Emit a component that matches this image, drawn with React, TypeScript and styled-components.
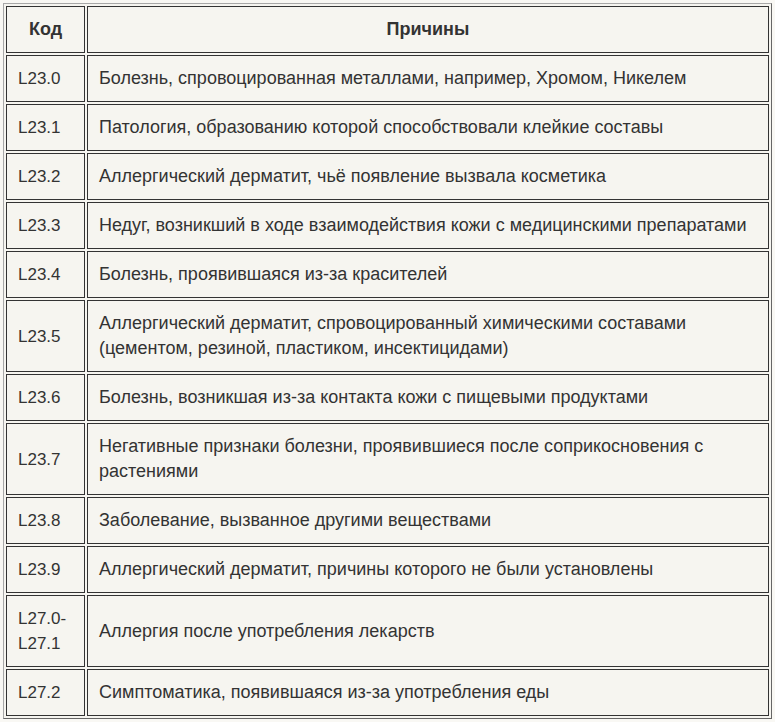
import React from 'react';
import styled, { createGlobalStyle } from 'styled-components';

const Global = createGlobalStyle`
  html, body {
    margin: 0;
    padding: 0;
    background: #f9f8f4;
  }
  body {
    font-family: "Liberation Sans", Arial, sans-serif;
    color: #333;
  }
`;

const Page = styled.div`
  padding: 3px 0 0 3px;
`;

const Table = styled.table`
  width: 769px;
  border-collapse: separate;
  border-spacing: 2px;
  border-top: 1px solid #a8a8a8;
  border-left: 1px solid #a8a8a8;
  border-right: 1px solid #666;
  border-bottom: 1px solid #666;
  background: #f6f5f0;
  font-size: 18px;
  line-height: 25px;
`;

const Th = styled.th<{ $code?: boolean }>`
  border: 1px solid #333;
  padding: 10px 11px;
  font-weight: bold;
  font-size: 18px;
  text-align: center;
  vertical-align: middle;
  width: ${p => (p.$code ? '55px' : 'auto')};
`;

const Td = styled.td<{ $code?: boolean }>`
  border: 1px solid #333;
  padding: 10px 11px;
  text-align: left;
  vertical-align: middle;
  width: ${p => (p.$code ? '55px' : 'auto')};
  font-size: ${p => (p.$code ? '17px' : '18px')};
`;

const rows: [string, string][] = [
  ['L23.0', 'Болезнь, спровоцированная металлами, например, Хромом, Никелем'],
  ['L23.1', 'Патология, образованию которой способствовали клейкие составы'],
  ['L23.2', 'Аллергический дерматит, чьё появление вызвала косметика'],
  ['L23.3', 'Недуг, возникший в ходе взаимодействия кожи с медицинскими препаратами'],
  ['L23.4', 'Болезнь, проявившаяся из-за красителей'],
  ['L23.5', 'Аллергический дерматит, спровоцированный химическими составами (цементом, резиной, пластиком, инсектицидами)'],
  ['L23.6', 'Болезнь, возникшая из-за контакта кожи с пищевыми продуктами'],
  ['L23.7', 'Негативные признаки болезни, проявившиеся после соприкосновения с растениями'],
  ['L23.8', 'Заболевание, вызванное другими веществами'],
  ['L23.9', 'Аллергический дерматит, причины которого не были установлены'],
  ['L27.0-L27.1', 'Аллергия после употребления лекарств'],
  ['L27.2', 'Симптоматика, появившаяся из-за употребления еды'],
];

export default function App() {
  return (
    <>
      <Global />
      <Page>
        <Table>
          <thead>
            <tr>
              <Th $code>Код</Th>
              <Th>Причины</Th>
            </tr>
          </thead>
          <tbody>
            {rows.map(([code, reason]) => (
              <tr key={code}>
                <Td $code>
                  {code.includes('-') ? (
                    <>
                      {code.split('-')[0]}-<br />
                      {code.split('-')[1]}
                    </>
                  ) : (
                    code
                  )}
                </Td>
                <Td>{reason}</Td>
              </tr>
            ))}
          </tbody>
        </Table>
      </Page>
    </>
  );
}
